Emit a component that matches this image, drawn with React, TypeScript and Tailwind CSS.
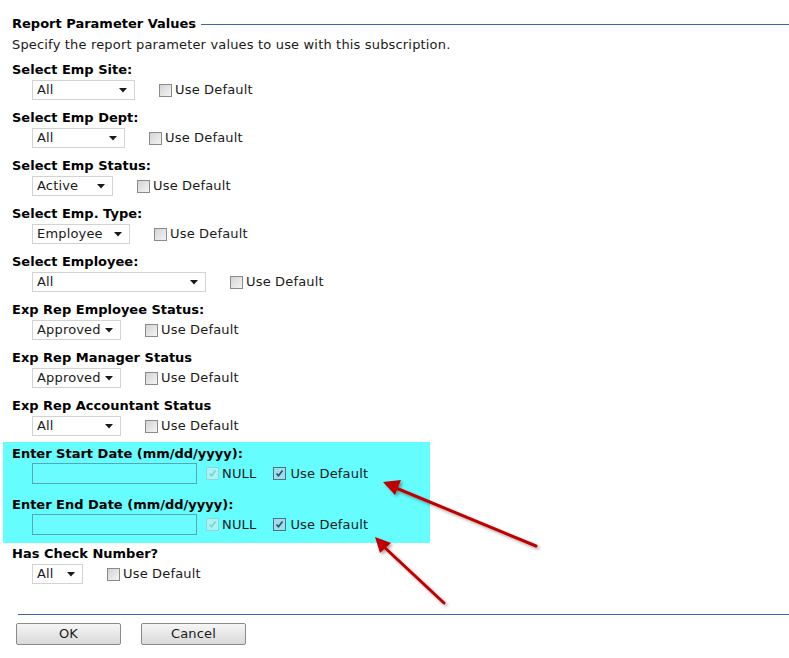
import React from "react";

function Check({ checked = false, disabled = false }: { checked?: boolean; disabled?: boolean }) {
  return (
    <span
      className={
        "inline-flex h-[13px] w-[13px] items-center justify-center border " +
        (disabled
          ? "border-[#8fd6d6] bg-[#a9f3f3]"
          : checked
          ? "border-[#4f6f8f] bg-[#9edfe6]"
          : "border-[#8a8a8a] bg-gradient-to-br from-[#d4d4d4] to-[#f4f4f4]")
      }
    >
      {checked && (
        <svg width="9" height="9" viewBox="0 0 9 9">
          <path
            d="M1.5 4.5 L3.5 6.8 L7.5 1.5"
            fill="none"
            stroke={disabled ? "#7fcfd0" : "#2c4a7a"}
            strokeWidth="1.6"
          />
        </svg>
      )}
    </span>
  );
}

function Select({ value, width }: { value: string; width: string }) {
  return (
    <div
      className={
        "ml-[20px] flex h-[20px] items-center justify-between border border-[#d3d3d3] bg-white pl-[4px] pr-[7px] " +
        width
      }
    >
      <span className="tracking-[0.17px] text-[#1a1a1a]">{value}</span>
      <svg width="8" height="5" viewBox="0 0 8 5">
        <path d="M0 0 L8 0 L4 4.5 Z" fill="#1a1a1a" />
      </svg>
    </div>
  );
}

function Param({
  label,
  value,
  width,
  gap,
}: {
  label: string;
  value: string;
  width: string;
  gap: string;
}) {
  return (
    <div className="mb-[10px]">
      <div className="h-[16px] font-bold leading-[16px] text-black">{label}</div>
      <div className="mt-[2px] flex items-center">
        <Select value={value} width={width} />
        <div className={"flex items-center " + gap}>
          <Check />
          <span className="ml-[3px] tracking-[0.17px] text-[#1a1a1a]">Use Default</span>
        </div>
      </div>
    </div>
  );
}

function DateParam({ label }: { label: string }) {
  return (
    <div>
      <div className="h-[16px] font-bold leading-[16px] text-black">{label}</div>
      <div className="mt-[1px] flex items-center">
        <div className="ml-[20px] h-[21px] w-[165px] border border-[#5aa7b4] bg-[#6afcff]"></div>
        <div className="ml-[9px] flex items-center">
          <Check checked disabled />
          <span className="ml-[3px] tracking-[0.17px] text-[#1a1a1a]">NULL</span>
        </div>
        <div className="ml-[17px] flex items-center">
          <Check checked />
          <span className="ml-[4px] tracking-[0.17px] text-[#1a1a1a]">Use Default</span>
        </div>
      </div>
    </div>
  );
}

export default function App() {
  return (
    <div
      className="relative h-[658px] w-[789px] overflow-hidden bg-white text-[13px] leading-[16px]"
      style={{ fontFamily: '"DejaVu Sans", Verdana, sans-serif' }}
    >
      <div className="pl-[12px] pt-[16px]">
        <div className="flex items-center">
          <span className="font-bold text-black">Report Parameter Values</span>
          <div className="ml-[5px] h-px flex-1 bg-[#3d68a8]"></div>
        </div>
        <div className="mt-[5px] tracking-[0.17px] text-[#1a1a1a]">
          Specify the report parameter values to use with this subscription.
        </div>
        <div className="mt-[9px]">
          <Param label="Select Emp Site:" value="All" width="w-[103px]" gap="ml-[24px]" />
          <Param label="Select Emp Dept:" value="All" width="w-[93px]" gap="ml-[24px]" />
          <Param label="Select Emp Status:" value="Active" width="w-[81px]" gap="ml-[24px]" />
          <Param label="Select Emp. Type:" value="Employee" width="w-[98px]" gap="ml-[24px]" />
          <Param label="Select Employee:" value="All" width="w-[174px]" gap="ml-[24px]" />
          <Param label="Exp Rep Employee Status:" value="Approved" width="w-[89px]" gap="ml-[24px]" />
          <Param label="Exp Rep Manager Status" value="Approved" width="w-[89px]" gap="ml-[24px]" />
          <Param label="Exp Rep Accountant Status" value="All" width="w-[89px]" gap="ml-[24px]" />
        </div>
        <div className="-mt-[4px] ml-[-9px] w-[427px] bg-[#66fdff] pb-[8px] pl-[9px] pt-[4px]">
          <DateParam label="Enter Start Date (mm/dd/yyyy):" />
          <div className="h-[13px]"></div>
          <DateParam label="Enter End Date (mm/dd/yyyy):" />
        </div>
        <div className="mt-[3px]">
          <Param label="Has Check Number?" value="All" width="w-[51px]" gap="ml-[24px]" />
        </div>
        <div className="ml-[6px] mt-[30px] h-px bg-[#3d68a8]"></div>
        <div className="mt-[8px] flex gap-[20px] pl-[4px]">
          <button className="h-[22px] w-[105px] rounded-[2px] border border-[#8a8a8a] bg-gradient-to-b from-[#f6f6f6] to-[#d9d9d9] tracking-[0.17px] text-[#1a1a1a]">
            OK
          </button>
          <button className="h-[22px] w-[105px] rounded-[2px] border border-[#8a8a8a] bg-gradient-to-b from-[#f6f6f6] to-[#d9d9d9] tracking-[0.17px] text-[#1a1a1a]">
            Cancel
          </button>
        </div>
      </div>
      <svg className="pointer-events-none absolute left-0 top-0" width="789" height="658">
        <defs>
          <filter id="sh" x="-20%" y="-20%" width="140%" height="140%">
            <feDropShadow dx="2" dy="2" stdDeviation="1.5" floodColor="#000" floodOpacity="0.35" />
          </filter>
        </defs>
        <g filter="url(#sh)">
          <line x1="536" y1="546" x2="396" y2="488" stroke="#c00000" strokeWidth="3" strokeLinecap="round" />
          <path d="M383 482 L401 480 L395 495 Z" fill="#c00000" />
          <line x1="444" y1="603" x2="383" y2="546" stroke="#c00000" strokeWidth="3" strokeLinecap="round" />
          <path d="M375 537 L391 543 L380 553 Z" fill="#c00000" />
        </g>
      </svg>
    </div>
  );
}
